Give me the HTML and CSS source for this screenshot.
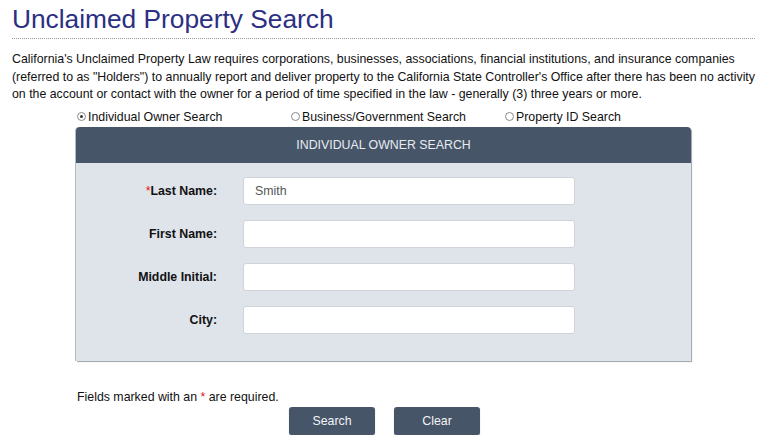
FILE: index.html
```html
<!DOCTYPE html>
<html>
<head>
<meta charset="utf-8">
<link rel="stylesheet" href="styles.css">
</head>
<body>
<div class="page">
  <h1 class="title">Unclaimed Property Search</h1>
  <p class="intro">California's Unclaimed Property Law requires corporations, businesses, associations, financial institutions, and insurance companies (referred to as "Holders") to annually report and deliver property to the California State Controller's Office after there has been no activity on the account or contact with the owner for a period of time specified in the law - generally (3) three years or more.</p>
  <div class="search">
    <div class="radios">
      <label class="radio"><span class="dot on"></span>Individual Owner Search</label>
      <label class="radio"><span class="dot"></span>Business/Government Search</label>
      <label class="radio"><span class="dot"></span>Property ID Search</label>
    </div>
    <div class="panel">
      <div class="panel-head">INDIVIDUAL OWNER SEARCH</div>
      <div class="panel-body">
        <div class="row"><label class="lbl"><span class="req">*</span>Last Name:</label><input class="field" type="text" value="Smith"></div>
        <div class="row"><label class="lbl">First Name:</label><input class="field" type="text"></div>
        <div class="row"><label class="lbl">Middle Initial:</label><input class="field" type="text"></div>
        <div class="row"><label class="lbl">City:</label><input class="field" type="text"></div>
      </div>
    </div>
    <p class="note">Fields marked with an <span class="req">*</span> are required.</p>
    <div class="buttons">
      <button class="btn">Search</button>
      <button class="btn">Clear</button>
    </div>
  </div>
</div>
</body>
</html>
```

FILE: styles.css
```css
html, body {
  margin: 0;
  padding: 0;
  background: #fff;
}
body {
  font-family: "Liberation Sans", Arial, sans-serif;
  color: #222;
}
.page {
  padding: 4px 13px 0 12px;
}
.title {
  margin: 0;
  font-size: 26.3px;
  font-weight: normal;
  color: #2c2f82;
  line-height: 30px;
  padding-bottom: 4px;
  border-bottom: 1px dotted #9a9a9a;
}
.intro {
  margin: 12px 0 0 0;
  font-size: 12.35px;
  line-height: 17.5px;
  color: #111;
}
.search {
  margin-left: 64px;
  width: 615px;
}
.radios {
  display: flex;
  margin-top: 4px;
  height: 18px;
  align-items: center;
  font-size: 12.35px;
  color: #111;
}
.radio {
  display: flex;
  align-items: center;
  flex: 0 0 auto;
  width: 213px;
  padding-left: 1px;
}
.radio:last-child {
  width: auto;
}
.dot {
  width: 9px;
  height: 9px;
  border: 1px solid #8a8a8a;
  border-radius: 50%;
  margin-right: 2px;
  box-sizing: border-box;
  position: relative;
  background: #fff;
}
.dot.on::after {
  content: "";
  position: absolute;
  left: 2px;
  top: 2px;
  width: 3px;
  height: 3px;
  border-radius: 50%;
  background: #333;
}
.panel {
  margin-top: 1px;
  border-radius: 4px 4px 0 0;
  box-shadow: 1px 1px 1px #9aa3ad, -1px 0 0 #b4bcc5;
  overflow: hidden;
}
.panel-head {
  background: #465568;
  color: #e8ecf1;
  font-size: 12.35px;
  text-align: center;
  height: 36px;
  line-height: 36px;
}
.panel-body {
  background: #dfe3ea;
  padding: 14px 0 27px 0;
  display: flex;
  flex-direction: column;
  gap: 15px;
}
.row {
  display: flex;
  align-items: center;
}
.lbl {
  width: 141px;
  text-align: right;
  font-weight: bold;
  font-size: 12.35px;
  color: #111;
  margin-right: 26px;
}
.req {
  color: #e3141e;
  font-weight: normal;
}
.field {
  width: 332px;
  height: 28px;
  box-sizing: border-box;
  border: 1px solid #cfd4db;
  border-radius: 3px;
  background: #fff;
  padding: 0 11px;
  font-family: "Liberation Sans", Arial, sans-serif;
  font-size: 12.35px;
  color: #555;
  outline: none;
}
.note {
  margin: 29px 0 0 1px;
  font-size: 12.35px;
  line-height: 15px;
  color: #111;
}
.buttons {
  display: flex;
  gap: 19px;
  margin-top: 2px;
  padding-left: 213px;
}
.btn {
  width: 86px;
  height: 28px;
  background: #465568;
  color: #f2f4f7;
  border: none;
  border-radius: 3px;
  box-shadow: 0 1px 1px #9aa3ad;
  font-family: "Liberation Sans", Arial, sans-serif;
  font-size: 12.35px;
  padding: 0;
}
```
